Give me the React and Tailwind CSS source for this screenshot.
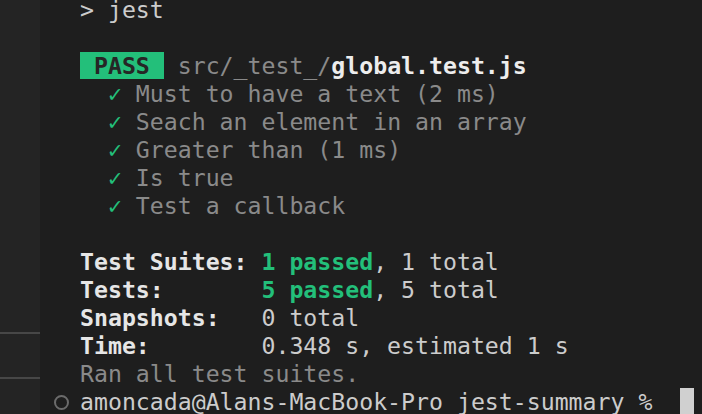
import React from 'react';

const tests = [
  'Must to have a text (2 ms)',
  'Seach an element in an array',
  'Greater than (1 ms)',
  'Is true',
  'Test a callback',
];

export default function App() {
  return (
    <div className="flex w-[702px] h-[414px] overflow-hidden bg-[#1e1e1e]">
      {/* Side panel */}
      <div className="w-[40px] shrink-0 flex flex-col bg-[#242424]">
        <div className="h-[332px]" />
        <div className="h-[2px] bg-[#474747]" />
        <div className="h-[43px]" />
        <div className="h-[2px] bg-[#474747]" />
      </div>

      {/* Terminal */}
      <div
        className="flex-1 pl-[40px] mt-[-4px] text-[23.2px] leading-[28px] whitespace-pre text-[#cccccc]"
        style={{ fontFamily: '"DejaVu Sans Mono", "Liberation Mono", monospace' }}
      >
        <div>{'> jest'}</div>
        <div>&nbsp;</div>
        <div>
          <span className="bg-[#23bf7a] text-[#262626] font-bold">{' PASS '}</span>
          <span className="text-[#8a8a8a]">{' src/_test_/'}</span>
          <span className="font-bold text-[#ededed]">global.test.js</span>
        </div>
        {tests.map((t) => (
          <div key={t} className="text-[#8a8a8a]">
            {'  '}
            <span className="text-[#23bf7a]">✓</span>
            {' ' + t}
          </div>
        ))}
        <div>&nbsp;</div>
        <div>
          <span className="font-bold text-[#e6e6e6]">{'Test Suites: '}</span>
          <span className="font-bold text-[#23bf7a]">1 passed</span>
          {', 1 total'}
        </div>
        <div>
          <span className="font-bold text-[#e6e6e6]">{'Tests:       '}</span>
          <span className="font-bold text-[#23bf7a]">5 passed</span>
          {', 5 total'}
        </div>
        <div>
          <span className="font-bold text-[#e6e6e6]">{'Snapshots:   '}</span>
          {'0 total'}
        </div>
        <div>
          <span className="font-bold text-[#e6e6e6]">{'Time:        '}</span>
          {'0.348 s, estimated 1 s'}
        </div>
        <div className="text-[#8a8a8a]">Ran all test suites.</div>
        <div className="relative">
          <span className="absolute left-[-26px] top-[7px] w-[15px] h-[15px] rounded-full border-2 border-[#6b6b6b]" />
          {'amoncada@Alans-MacBook-Pro jest-summary %  '}
          <span className="inline-block align-top w-[14px] h-[28px] bg-[#d0d0d0]" />
        </div>
      </div>
    </div>
  );
}
